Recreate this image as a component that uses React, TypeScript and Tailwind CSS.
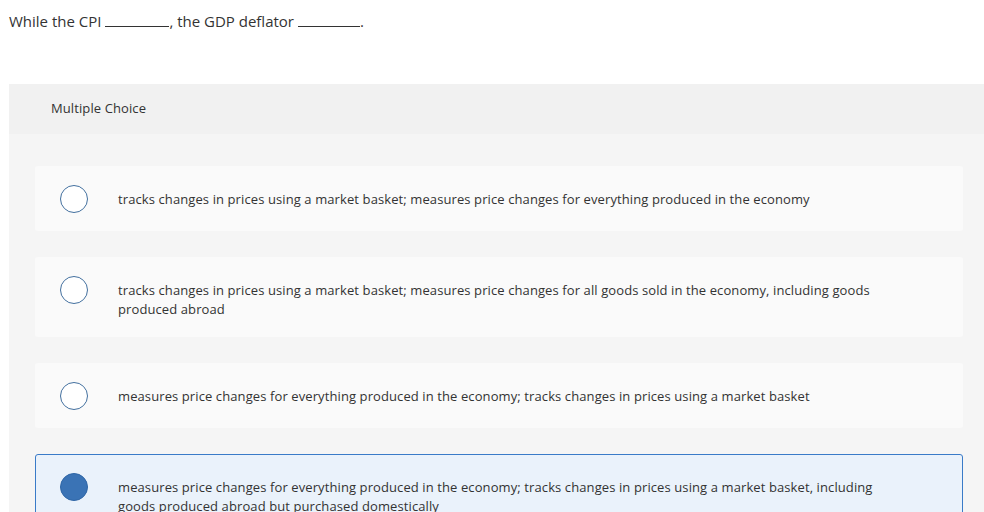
const options = [
  { text: 'tracks changes in prices using a market basket; measures price changes for everything produced in the economy', lines: 1 },
  { text: 'tracks changes in prices using a market basket; measures price changes for all goods sold in the economy, including goods produced abroad', lines: 2 },
  { text: 'measures price changes for everything produced in the economy; tracks changes in prices using a market basket', lines: 1 },
  { text: 'measures price changes for everything produced in the economy; tracks changes in prices using a market basket, including goods produced abroad but purchased domestically', lines: 2 },
];

const selected = 3;

export default function App() {
  return (
    <div className="min-h-screen bg-white text-[#333] font-['Open_Sans',sans-serif] overflow-hidden">
      <p className="pl-[9px] pt-[11px] text-[15px] leading-[20px]">
        While the CPI{' '}
        <span className="inline-block w-[64px] border-b border-[#333] align-baseline" />
        , the GDP deflator{' '}
        <span className="inline-block w-[62px] border-b border-[#333] align-baseline" />.
      </p>

      <div className="ml-[9px] mt-[53px]">
        <div className="bg-[#f1f1f1] h-[50px] pl-[42px] flex items-center text-[13px] tracking-[0.1px]">
          Multiple Choice
        </div>
        <div className="bg-[#f5f5f5] pt-[32px] pb-[24px] pl-[26px] pr-[21px] flex flex-col gap-[26px]">
          {options.map((o, i) => {
            const isSel = i === selected;
            const pb = o.lines === 1 ? (isSel ? 'pb-[21px]' : 'pb-[22px]') : isSel ? 'pb-[17px]' : 'pb-[18px]';
            return (
              <div
                key={i}
                className={
                  (isSel
                    ? 'flex items-start pt-[23px] pl-[24px] pr-[67px] rounded-[3px] bg-[#eaf2fb] border border-[#3a7bc8] '
                    : 'flex items-start pt-[24px] pl-[25px] pr-[68px] rounded-[3px] bg-[#fafafa] ') + pb
                }
              >
                <span
                  className={
                    isSel
                      ? 'shrink-0 -mt-[5px] -mb-[4px] w-[28px] h-[28px] rounded-full bg-[#3a73b5] border-[1.5px] border-[#2f66a6]'
                      : 'shrink-0 -mt-[5px] -mb-[4px] w-[28px] h-[28px] rounded-full bg-white border-[1.5px] border-[#43709f]'
                  }
                />
                <span className="ml-[30px] text-[13px] leading-[19px] tracking-[0.1px]">{o.text}</span>
              </div>
            );
          })}
        </div>
      </div>
    </div>
  );
}
